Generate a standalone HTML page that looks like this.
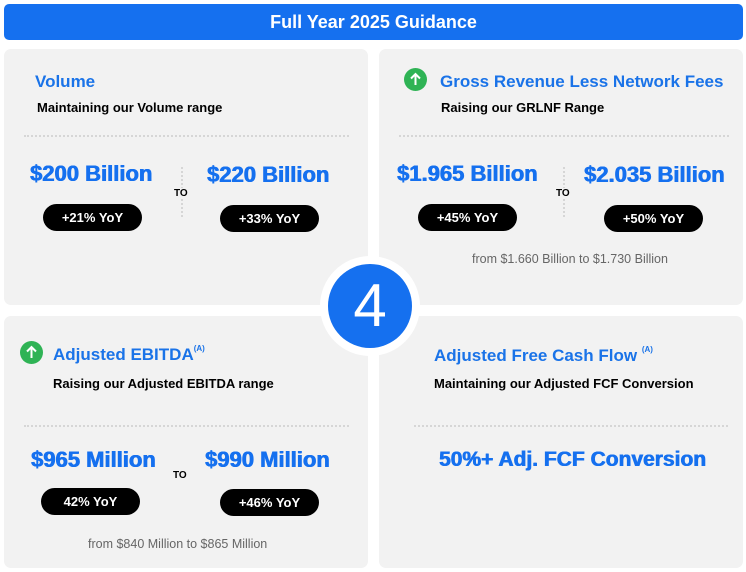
<!DOCTYPE html>
<html><head><meta charset="utf-8"><style>
*{margin:0;padding:0;box-sizing:border-box}
body{width:746px;height:572px;background:#fff;position:relative;font-family:"Liberation Sans",sans-serif;overflow:hidden}
.a{position:absolute;white-space:nowrap}
.hdr{left:4px;top:4px;width:739px;height:36px;background:#1570ef;border-radius:5px;color:#fff;font-weight:bold;font-size:18px;text-align:center;line-height:36px}
.p{position:absolute;background:#f2f2f2;border-radius:7px}
.t{color:#1a73e8;font-size:17px;font-weight:bold}
.s{color:#000;font-size:13px;font-weight:bold}
.big{color:#1570ef;font-size:22px;font-weight:bold;letter-spacing:0px;text-shadow:0.5px 0 0 #1570ef,-0.3px 0 0 #1570ef}
.pill{background:#000;color:#fff;font-weight:bold;font-size:13px;border-radius:14px;height:27px;line-height:27px;text-align:center;width:99px}
.dot{border-top:2px dotted #d6d6d6;height:0}
.vd{border-left:2px dotted #d6d6d6;width:0}
.to{font-size:10px;font-weight:bold;color:#000}
.g{color:#666;font-size:12.5px}
.up{width:23px;height:23px;border-radius:50%;background:#2fb355}
sup{font-size:8px;vertical-align:9px}
</style></head><body>
<div class="a hdr">Full Year 2025 Guidance</div>
<div class="p" style="left:4px;top:49px;width:364px;height:256px"></div>
<div class="p" style="left:379px;top:49px;width:364px;height:256px"></div>
<div class="p" style="left:4px;top:316px;width:364px;height:252px"></div>
<div class="p" style="left:379px;top:316px;width:364px;height:252px"></div>

<!-- TL -->
<div class="a t" style="left:35px;top:72px">Volume</div>
<div class="a s" style="left:37px;top:100px">Maintaining our Volume range</div>
<div class="a dot" style="left:24px;top:135px;width:325px"></div>
<div class="a big" style="left:30px;top:161px">$200 Billion</div>
<div class="a big" style="left:207px;top:162px">$220 Billion</div>
<div class="a vd" style="left:181px;top:167px;height:50px"></div>
<div class="a to" style="left:174px;top:188px;background:#f2f2f2">TO</div>
<div class="a pill" style="left:43px;top:204px">+21% YoY</div>
<div class="a pill" style="left:220px;top:205px">+33% YoY</div>

<!-- TR -->
<div class="a up" style="left:404px;top:68px"><svg width="23" height="23" viewBox="0 0 23 23"><path d="M11.5 17V6M7 10.5l4.5-4.5 4.5 4.5" stroke="#fff" stroke-width="2" fill="none"/></svg></div>
<div class="a t" style="left:440px;top:72px">Gross Revenue Less Network Fees</div>
<div class="a s" style="left:441px;top:100px">Raising our GRLNF Range</div>
<div class="a dot" style="left:399px;top:135px;width:330px"></div>
<div class="a big" style="left:397px;top:161px">$1.965 Billion</div>
<div class="a big" style="left:584px;top:162px">$2.035 Billion</div>
<div class="a vd" style="left:563px;top:167px;height:50px"></div>
<div class="a to" style="left:556px;top:188px;background:#f2f2f2">TO</div>
<div class="a pill" style="left:418px;top:204px">+45% YoY</div>
<div class="a pill" style="left:604px;top:205px">+50% YoY</div>
<div class="a g" style="left:472px;top:252px">from $1.660 Billion to $1.730 Billion</div>

<!-- BL -->
<div class="a up" style="left:20px;top:341px"><svg width="23" height="23" viewBox="0 0 23 23"><path d="M11.5 17V6M7 10.5l4.5-4.5 4.5 4.5" stroke="#fff" stroke-width="2" fill="none"/></svg></div>
<div class="a t" style="left:53px;top:344px">Adjusted EBITDA<sup>(A)</sup></div>
<div class="a s" style="left:53px;top:376px">Raising our Adjusted EBITDA range</div>
<div class="a dot" style="left:24px;top:425px;width:325px"></div>
<div class="a big" style="left:31px;top:447px">$965 Million</div>
<div class="a big" style="left:205px;top:447px">$990 Million</div>
<div class="a to" style="left:173px;top:470px">TO</div>
<div class="a pill" style="left:41px;top:488px">42% YoY</div>
<div class="a pill" style="left:220px;top:489px">+46% YoY</div>
<div class="a g" style="left:88px;top:537px">from $840 Million to $865 Million</div>

<!-- BR -->
<div class="a t" style="left:434px;top:345px">Adjusted Free Cash Flow <sup>(A)</sup></div>
<div class="a s" style="left:434px;top:376px">Maintaining our Adjusted FCF Conversion</div>
<div class="a dot" style="left:414px;top:425px;width:314px"></div>
<div class="a big" style="left:439px;top:448px;font-size:21px">50%+ Adj. FCF Conversion</div>

<div class="a" style="left:320px;top:256px;width:100px;height:100px;border-radius:50%;background:#fff"></div>
<div class="a" style="left:328px;top:264px;width:84px;height:84px;border-radius:50%;background:#1570ef;color:#fff;font-size:60px;text-align:center;line-height:84px">4</div>
</body></html>
